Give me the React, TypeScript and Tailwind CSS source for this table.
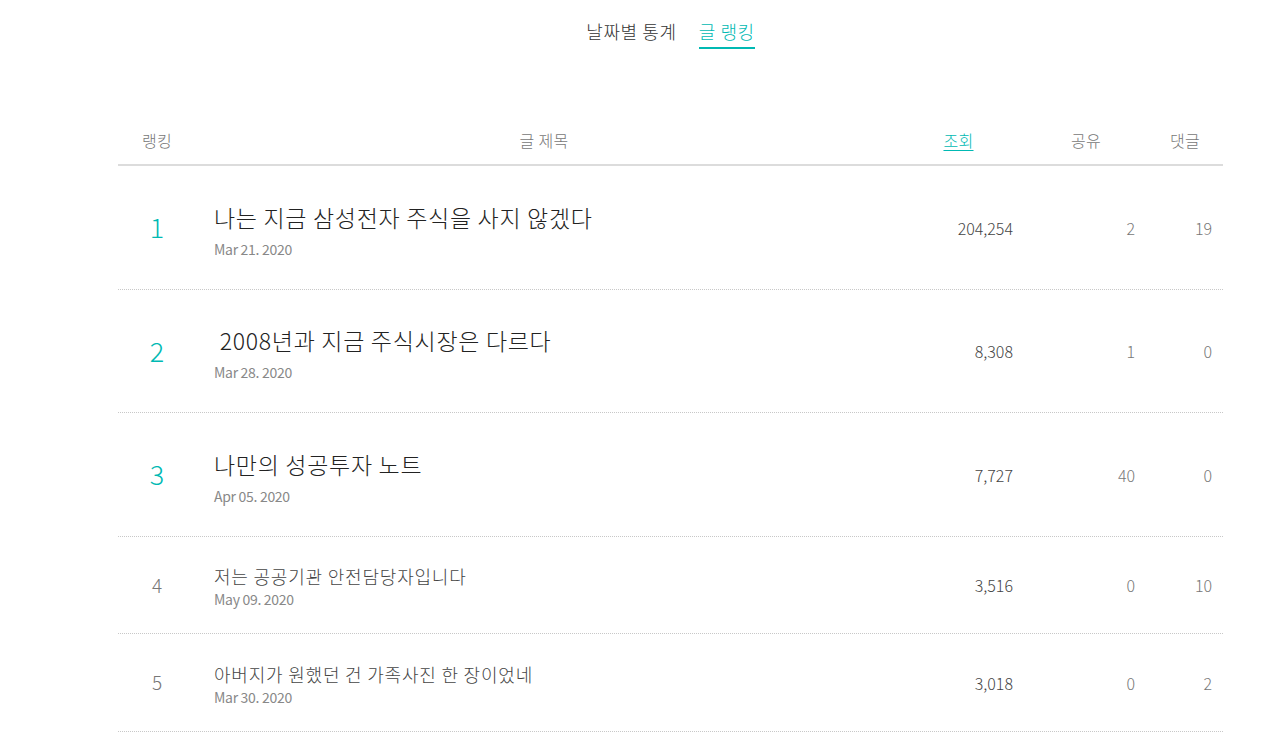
const posts = [
  { rank: 1, title: "나는 지금 삼성전자 주식을 사지 않겠다", date: "Mar 21. 2020", views: "204,254", shares: "2", comments: "19", h: "h-[124px]" },
  { rank: 2, title: " 2008년과 지금 주식시장은 다르다", date: "Mar 28. 2020", views: "8,308", shares: "1", comments: "0", h: "h-[123px]" },
  { rank: 3, title: "나만의 성공투자 노트", date: "Apr 05. 2020", views: "7,727", shares: "40", comments: "0", h: "h-[124px]" },
  { rank: 4, title: "저는 공공기관 안전담당자입니다", date: "May 09. 2020", views: "3,516", shares: "0", comments: "10", h: "h-[97px]" },
  { rank: 5, title: "아버지가 원했던 건 가족사진 한 장이었네", date: "Mar 30. 2020", views: "3,018", shares: "0", comments: "2", h: "h-[98px]" },
];

export default function App() {
  return (
    <div className="min-h-screen bg-white font-['Noto_Sans_CJK_KR','Noto_Sans',sans-serif] text-[#333]">
      <div className="ml-[118px] w-[1105px]">
        {/* tabs */}
        <div className="flex justify-center gap-[22px] pt-[19px]">
          <span className="text-[18px] leading-[25px] tracking-[0.6px] font-light text-[#333] pb-[3px]">날짜별 통계</span>
          <span className="text-[18px] leading-[25px] tracking-[0.6px] font-light text-[#00b9b3] pb-[3px] border-b-2 border-[#00b9b3]">글 랭킹</span>
        </div>

        {/* header */}
        <div className="mt-[66px] flex h-[51px] items-center border-b-2 border-[#dcdcdc] text-[16px] tracking-[0.3px] font-light text-[#777]">
          <div className="w-[78px] text-center">랭킹</div>
          <div className="w-[696px] text-center">글 제목</div>
          <div className="w-[133px] text-center">
            <span className="text-[#00b9b3] underline underline-offset-[3px]">조회</span>
          </div>
          <div className="w-[122px] text-center">공유</div>
          <div className="w-[76px] text-center">댓글</div>
        </div>

        {/* rows */}
        {posts.map((p) => {
          const top = p.rank <= 3;
          return (
            <div key={p.rank} className={`flex items-center border-b border-dotted border-[#c8c8c8] ${p.h}`}>
              <div
                className={
                  top
                    ? "w-[78px] text-center text-[27px] font-light text-[#00b9b3]"
                    : "w-[78px] text-center text-[19px] font-light text-[#777]"
                }
              >
                {p.rank}
              </div>
              <div className={top ? "w-[696px] pl-[18px] mt-[5px]" : "w-[696px] pl-[18px] mt-[2px]"}>
                <div
                  className={
                    top
                      ? "whitespace-pre text-[23px] leading-[30px] tracking-[0.7px] font-light text-[#222]"
                      : "whitespace-pre text-[18px] leading-[24px] tracking-[0.8px] font-light text-[#444]"
                  }
                >
                  {p.title}
                </div>
                <div
                  className={
                    top
                      ? "mt-[7px] text-[14px] leading-[20px] tracking-[-0.3px] text-[#888]"
                      : "mt-[2px] text-[14px] leading-[18px] tracking-[-0.3px] text-[#888]"
                  }
                >
                  {p.date}
                </div>
              </div>
              <div className="w-[133px] pr-[12px] text-right text-[16px] font-light text-[#444]">{p.views}</div>
              <div className="w-[122px] pr-[12px] text-right text-[16px] font-light text-[#777]">{p.shares}</div>
              <div className="w-[76px] pr-[11px] text-right text-[16px] font-light text-[#777]">{p.comments}</div>
            </div>
          );
        })}
      </div>
    </div>
  );
}
